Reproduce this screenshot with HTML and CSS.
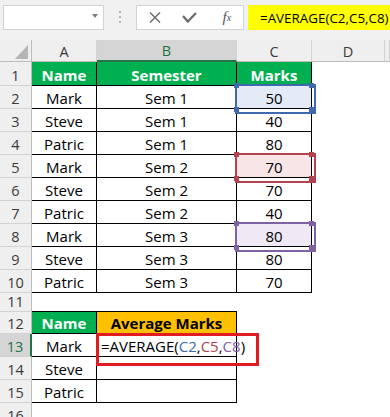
FILE: index.html
```html
<!DOCTYPE html>
<html>
<head>
	<meta charset="utf-8">
	<meta name="viewport" content="width=device-width, initial-scale=1">
	<title>AVERAGE of selected cells</title>
	<link rel="stylesheet" href="styles.css">
</head>
<body>
	<div class="fbar">
		<div class="namebox"><span class="caret"></span></div>
		<div class="grip"><i></i><i></i><i></i></div>
		<div class="fbtns">
			<span class="btn">
				<svg width="12" height="11" viewBox="0 0 12 11"><path d="M1 0.5 L11 10.5 M11 0.5 L1 10.5" stroke="#6f6f6f" stroke-width="1.5" fill="none"/></svg>
			</span>
			<span class="btn">
				<svg width="15" height="11" viewBox="0 0 15 11"><path d="M1 4 L5.8 9.5 L14 1" stroke="#6c6c6c" stroke-width="2.3" fill="none"/></svg>
			</span>
			<span class="btn fx">f<sub>x</sub></span>
		</div>
		<div class="formula">=AVERAGE(C2,C5,C8)</div>
	</div>

	<div class="sheet">
		<!-- column headers -->
		<div class="corner"><span></span></div>
		<div class="h">A</div>
		<div class="h sel colsel">B</div>
		<div class="h">C</div>
		<div class="h">D</div>
		<div class="h"></div>

		<div class="r">1</div>
		<div class="c g">Name</div>
		<div class="c g">Semester</div>
		<div class="c g">Marks</div>
		<div></div><div></div>

		<div class="r">2</div>
		<div class="c">Mark</div>
		<div class="c">Sem 1</div>
		<div class="c ref blue">50</div>
		<div></div><div></div>

		<div class="r">3</div>
		<div class="c">Steve</div>
		<div class="c">Sem 1</div>
		<div class="c">40</div>
		<div></div><div></div>

		<div class="r">4</div>
		<div class="c">Patric</div>
		<div class="c">Sem 1</div>
		<div class="c">80</div>
		<div></div><div></div>

		<div class="r">5</div>
		<div class="c">Mark</div>
		<div class="c">Sem 2</div>
		<div class="c ref red">70</div>
		<div></div><div></div>

		<div class="r">6</div>
		<div class="c">Steve</div>
		<div class="c">Sem 2</div>
		<div class="c">70</div>
		<div></div><div></div>

		<div class="r">7</div>
		<div class="c">Patric</div>
		<div class="c">Sem 2</div>
		<div class="c">40</div>
		<div></div><div></div>

		<div class="r">8</div>
		<div class="c">Mark</div>
		<div class="c">Sem 3</div>
		<div class="c ref purple">80</div>
		<div></div><div></div>

		<div class="r">9</div>
		<div class="c">Steve</div>
		<div class="c">Sem 3</div>
		<div class="c">80</div>
		<div></div><div></div>

		<div class="r">10</div>
		<div class="c">Patric</div>
		<div class="c">Sem 3</div>
		<div class="c">70</div>
		<div></div><div></div>

		<div class="r">11</div>
		<div class="bb"></div>
		<div class="bb"></div>
		<div></div><div></div><div></div>

		<div class="r">12</div>
		<div class="c g">Name</div>
		<div class="c o">Average Marks</div>
		<div></div><div></div><div></div>

		<div class="r sel rowsel">13</div>
		<div class="c">Mark</div>
		<div class="c edit">=AVERAGE(<span class="k-blue">C2</span>,<span class="k-red">C5</span>,<span class="k-purple">C8</span>)</div>
		<div></div><div></div><div></div>

		<div class="r">14</div>
		<div class="c">Steve</div>
		<div class="c"></div>
		<div></div><div></div><div></div>

		<div class="r">15</div>
		<div class="c">Patric</div>
		<div class="c"></div>
		<div></div><div></div><div></div>

		<div class="r">16</div>
		<div></div><div></div><div></div><div></div><div></div>
	</div>
</body>
</html>
```

FILE: styles.css
```css
* {
  box-sizing: border-box;
}

html, body {
  margin: 0;
  height: 100%;
}

body {
  width: 390px;
  overflow: hidden;
  background: #fff;
  font-family: "Open Sans", sans-serif;
  color: #000;
}

/* formula bar */
.fbar {
  display: flex;
  height: 40px;
  padding: 5px 0 10px 3px;
  background: #f1f1f1;
}

.namebox {
  width: 101px;
  background: #fff;
  border: 1px solid #d2d2d2;
  display: flex;
  align-items: center;
  justify-content: flex-end;
  padding: 0 5px 4px 0;
}

.caret {
  border-left: 3px solid transparent;
  border-right: 3px solid transparent;
  border-top: 4px solid #7d7d7d;
}

.grip {
  width: 32px;
  display: flex;
  flex-direction: column;
  align-items: center;
  justify-content: center;
  gap: 3px;
  padding-bottom: 1px;
}

.grip i {
  width: 2px;
  height: 2px;
  background: #b3b3b3;
}

.fbtns {
  width: 108px;
  background: #fff;
  border: 1px solid #d2d2d2;
  display: flex;
  align-items: center;
}

.btn {
  width: 36px;
  display: flex;
  justify-content: center;
  align-items: center;
}

.btn svg {
  display: block;
}

.fx {
  font-family: "Liberation Serif", serif;
  font-style: italic;
  font-size: 15px;
  color: #555;
  line-height: 1;
  padding-left: 3px;
}

.fx sub {
  font-size: 10px;
  vertical-align: -1px;
}

.formula {
  flex: 1;
  margin-left: 4px;
  background: #ffff00;
  font-size: 13.4px;
  line-height: 23px;
  padding: 2px 0 0 12px;
  white-space: nowrap;
  overflow: hidden;
}

/* grid */
.sheet {
  display: grid;
  grid-template-columns: 32px 65px 140px 75px 73px 5px;
  grid-template-rows: 22px 24px repeat(9, 23px) 19px 22px repeat(5, 23px);
}

.sheet > div {
  display: flex;
  align-items: flex-end;
  justify-content: center;
  font-size: 15px;
  line-height: 19px;
  white-space: nowrap;
}

.corner {
  background: #efefef;
  border-right: 1px solid #bdbdbd;
  border-bottom: 1px solid #bdbdbd;
}

.sheet > .corner {
  justify-content: flex-end;
  padding: 0 3px 2px 0;
}

.corner span {
  width: 13px;
  height: 14px;
  background: #b5b5b5;
  clip-path: polygon(100% 0, 100% 100%, 0 100%);
}

.h {
  background: #efefef;
  border-right: 1px solid #d3d3d3;
  border-bottom: 1px solid #bdbdbd;
  color: #3b3b3b;
}

.sheet > .h, .sheet > .r {
  font-size: 14.5px;
}

.r {
  background: #efefef;
  border-right: 1px solid #bdbdbd;
  border-bottom: 1px solid #d3d3d3;
  color: #3b3b3b;
}

.sel {
  background: #d5d5d5;
  color: #217346;
}

.colsel {
  border-bottom: 2px solid #217346;
}

.rowsel {
  border-right: 2px solid #217346;
}

.c {
  border-right: 1px solid #000;
  border-bottom: 1px solid #000;
}

.bb {
  border-bottom: 1px solid #000;
}

.g {
  background: #00b050;
  color: #fff;
  font-weight: 700;
}

.o {
  background: #ffc000;
  font-weight: 700;
}

/* range references in the formula */
.ref {
  position: relative;
}

.ref::before {
  content: "";
  position: absolute;
  left: -2px;
  top: -2px;
  width: 77px;
  height: 26px;
  border: 2px solid var(--ref);
}

.ref::after {
  content: "";
  position: absolute;
  left: -3px;
  top: -3px;
  width: 5px;
  height: 5px;
  background: var(--ref);
  box-shadow: 75px 0 0 var(--ref), 0 24px 0 var(--ref), 75px 24px 0 var(--ref);
}

.blue {
  --ref: #4169b0;
  background: #e5ebf6;
}

.red {
  --ref: #b3434f;
  background: #f7e5e7;
}

.purple {
  --ref: #7f62a3;
  background: #eee9f5;
}

.k-blue {
  color: #4169b0;
}

.k-red {
  color: #b3434f;
}

.k-purple {
  color: #7f62a3;
}

.sheet > .edit {
  position: relative;
  justify-content: flex-start;
  padding-left: 4px;
  overflow: visible;
}

.edit::before {
  content: "";
  position: absolute;
  left: -1px;
  top: -1px;
  width: 157px;
  height: 27px;
  border: 3px solid #e01b22;
}
```
